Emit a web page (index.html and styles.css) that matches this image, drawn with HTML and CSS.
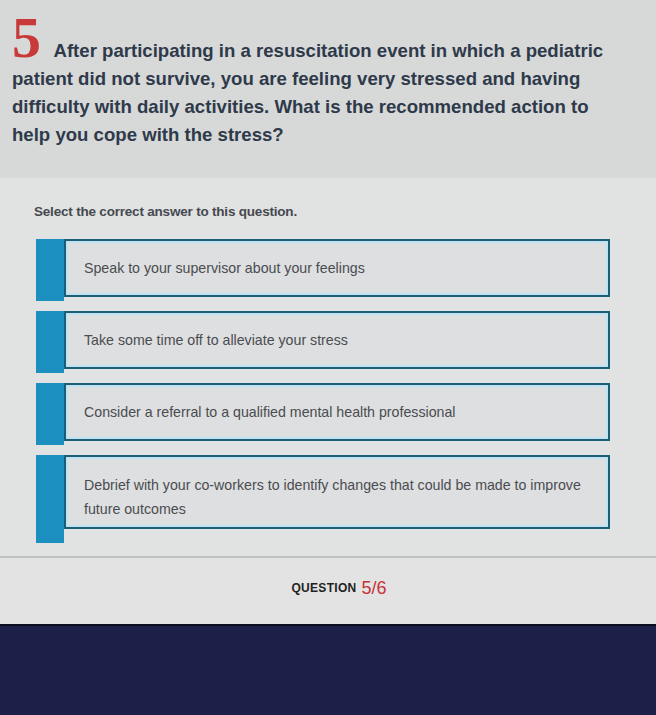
FILE: index.html
```html
<!DOCTYPE html>
<html>
<head>
<meta charset="utf-8">
<link rel="stylesheet" href="styles.css">
</head>
<body>
<div class="screen">
  <header class="head">
    <p class="question"><span class="num">5</span> After participating in a resuscitation event in which a pediatric patient did not survive, you are feeling very stressed and having difficulty with daily activities. What is the recommended action to help you cope with the stress?</p>
  </header>
  <main class="body">
    <p class="prompt">Select the correct answer to this question.</p>
    <div class="options">
      <div class="opt"><div class="tab"></div><div class="box">Speak to your supervisor about your feelings</div></div>
      <div class="opt"><div class="tab"></div><div class="box">Take some time off to alleviate your stress</div></div>
      <div class="opt"><div class="tab"></div><div class="box">Consider a referral to a qualified mental health professional</div></div>
      <div class="opt tall"><div class="tab"></div><div class="box">Debrief with your co-workers to identify changes that could be made to improve future outcomes</div></div>
    </div>
  </main>
  <footer class="foot">
    <span class="qlabel">QUESTION</span> <span class="qnum">5/6</span>
  </footer>
  <div class="dark"></div>
</div>
</body>
</html>
```
FILE: styles.css
```css
html, body { margin: 0; padding: 0; }
body { width: 656px; height: 715px; overflow: hidden; font-family: "Liberation Sans", Arial, sans-serif; background: #1c1f48; }
.screen { display: flex; flex-direction: column; height: 715px; }
.head { background: #d7d8d8; height: 178px; padding: 24px 30px 0 12px; box-sizing: border-box; }
.question { margin: 0; font-weight: bold; font-size: 18.6px; line-height: 28px; color: #2e3a4a; }
.num { font-family: "Liberation Serif", "Times New Roman", serif; font-size: 58px; color: #c83a3a; font-weight: bold; line-height: 28px; margin-right: 8px; }
.body { background: #e1e2e2; height: 380px; padding: 26px 46px 0 34px; box-sizing: border-box; border-bottom: 2px solid #bfc0c0; }
.prompt { margin: 0 0 20px; font-size: 13.5px; font-weight: bold; color: #454a50; letter-spacing: -0.2px; }
.options { display: flex; flex-direction: column; gap: 10px; padding-left: 2px; }
.opt { display: flex; height: 62px; }
.opt.tall { height: 88px; }
.tab { width: 28px; background: #1b8fc0; flex: none; }
.box { flex: 1; border: 2px solid #1e5d78; box-shadow: inset 0 0 0 2px #bfe3f3; display: flex; align-items: center; padding: 0 18px; font-size: 14.2px; color: #4a4c50; margin-bottom: 4px; background: #dedfe0; line-height: 24px; }
.opt.tall .box { margin-bottom: 14px; align-items: flex-start; padding-top: 16px; }
.foot { background: #e3e3e3; height: 66px; display: flex; align-items: center; justify-content: center; padding-left: 22px; gap: 5px; box-sizing: border-box; padding-bottom: 6px; }
.qlabel { font-size: 12px; font-weight: bold; color: #222; letter-spacing: 0.3px; }
.qnum { font-size: 18px; color: #c8323a; }
.dark { flex: 1; background: #1c1f48; border-top: 2px solid #0c0e20; }
```
